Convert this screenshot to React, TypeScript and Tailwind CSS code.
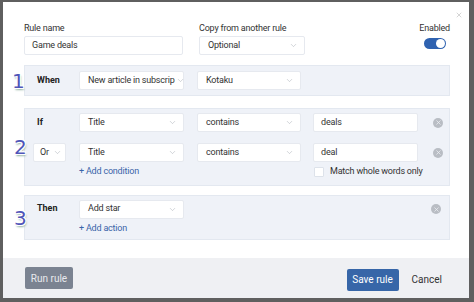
import { ChevronDown, X } from "lucide-react";

function Select({
  value,
  w,
  pl = "pl-[8px]",
  pr = "pr-[6px]",
}: {
  value: string;
  w: string;
  pl?: string;
  pr?: string;
}) {
  return (
    <div
      className={`${w} ${pl} ${pr} h-[19px] bg-white border border-[#e6e9ef] rounded-[2px] flex items-center justify-between text-[9px] tracking-[-0.2px] text-[#333]`}
    >
      <span className="whitespace-nowrap">{value}</span>
      <ChevronDown size={9} strokeWidth={1.3} className="text-[#a3a9b2] shrink-0 ml-[1px]" />
    </div>
  );
}

function Input({ value, w }: { value: string; w: string }) {
  return (
    <div
      className={`${w} h-[19px] bg-white border border-[#e6e9ef] rounded-[2px] flex items-center pl-[7px] text-[9px] tracking-[-0.2px] text-[#333]`}
    >
      {value}
    </div>
  );
}

function RemoveBtn() {
  return (
    <div className="w-[10px] h-[10px] rounded-full bg-[#b9bdc4] flex items-center justify-center ml-[15px]">
      <X size={7} strokeWidth={2.5} className="text-[#eef1f5]" />
    </div>
  );
}

function Num({ n, cls }: { n: string; cls: string }) {
  return (
    <span
      className={`absolute ${cls} text-[20px] leading-none text-[#4f55b8] [text-shadow:1px_1px_0_#fff,-1px_-1px_0_#fff,1px_-1px_0_#fff,-1px_1px_0_#fff,1px_2px_2px_#8a9]`}
      style={{ fontFamily: "'DejaVu Sans', sans-serif" }}
    >
      {n}
    </span>
  );
}

export default function App() {
  return (
    <div
      className="w-[474px] h-[302px] bg-[#5f5f5f] pl-[3px] pt-[2px] pr-[5px] pb-[4px]"
      style={{ fontFamily: "Roboto, 'Liberation Sans', sans-serif" }}
    >
      <div className="h-full bg-white flex flex-col relative">
        <X size={8} strokeWidth={1.5} className="absolute right-[6px] top-[9px] text-[#aaa]" />

        <div className="flex-1 pl-[21px] pr-[19px] pt-[20px] relative">
          {/* header fields */}
          <div className="flex items-start">
            <div className="flex flex-col">
              <span className="text-[9px] tracking-[-0.2px] text-[#333] leading-[12px] mb-[2px]">Rule name</span>
              <Input value="Game deals" w="w-[159px]" />
            </div>
            <div className="flex flex-col ml-[16px]">
              <span className="text-[9px] tracking-[-0.2px] text-[#333] leading-[12px] mb-[2px]">Copy from another rule</span>
              <Select value="Optional" w="w-[106px]" />
            </div>
            <div className="flex-1" />
            <div className="flex flex-col items-end">
              <span className="text-[9px] tracking-[-0.2px] text-[#333] leading-[12px] mb-[4px]">Enabled</span>
              <div className="w-[22px] h-[11px] rounded-full bg-[#2f62b0] flex items-center justify-end pr-[1px] mr-[4px]">
                <div className="w-[9px] h-[9px] rounded-full bg-white" />
              </div>
            </div>
          </div>

          {/* When */}
          <div className="relative mt-[10px]">
            <Num n="1" cls="-left-[12px] top-[6px]" />
            <div className="h-[31px] bg-[#eff2f8] border border-[#e3e8f0] flex items-center pl-[8px]">
              <span className="w-[46px] pl-[4px] text-[9px] font-bold text-[#222]">When</span>
              <Select value="New article in subscrip" w="w-[105px]" pr="pr-[4px]" />
              <div className="w-[13px]" />
              <Select value="Kotaku" w="w-[104px]" />
            </div>
          </div>

          {/* If */}
          <div className="relative mt-[12px]">
            <Num n="2" cls="-left-[10px] top-[29px]" />
            <div className="bg-[#eff2f8] border border-[#e3e8f0] pl-[8px] pt-[4px] pb-[6px]">
              <div className="flex items-center">
                <span className="w-[46px] pl-[4px] text-[9px] font-bold text-[#222]">If</span>
                <Select value="Title" w="w-[105px]" />
                <div className="w-[13px]" />
                <Select value="contains" w="w-[104px]" />
                <div className="w-[12px]" />
                <Input value="deals" w="w-[105px]" />
                <RemoveBtn />
              </div>
              <div className="flex items-center mt-[11px]">
                <div className="w-[46px]">
                  <Select value="Or" w="w-[33px]" pl="pl-[6px]" pr="pr-[3px]" />
                </div>
                <Select value="Title" w="w-[105px]" />
                <div className="w-[13px]" />
                <Select value="contains" w="w-[104px]" />
                <div className="w-[12px]" />
                <Input value="deal" w="w-[105px]" />
                <RemoveBtn />
              </div>
              <div className="flex items-center mt-[3px]">
                <span className="w-[46px]" />
                <span className="w-[234px] text-[9px] tracking-[-0.2px] text-[#3a64a8]">+ Add condition</span>
                <div className="w-[10px] h-[10px] bg-white border border-[#dde2ea] rounded-[1px] ml-[1px]" />
                <span className="ml-[6px] text-[9px] tracking-[-0.2px] text-[#333]">Match whole words only</span>
              </div>
            </div>
          </div>

          {/* Then */}
          <div className="relative mt-[9px]">
            <Num n="3" cls="-left-[10px] top-[13px]" />
            <div className="bg-[#eff2f8] border border-[#e3e8f0] pl-[8px] pt-[4px] pb-[4px]">
              <div className="flex items-center">
                <span className="w-[46px] pl-[4px] text-[9px] font-bold text-[#222]">Then</span>
                <Select value="Add star" w="w-[105px]" />
                <div className="flex-1" />
                <div className="mr-[8px]">
                  <RemoveBtn />
                </div>
              </div>
              <div className="flex items-center mt-[3px]">
                <span className="w-[46px]" />
                <span className="text-[9px] tracking-[-0.2px] text-[#3a64a8]">+ Add action</span>
              </div>
            </div>
          </div>
        </div>

        {/* footer */}
        <div className="h-[40px] bg-[#eff0f3] flex items-center pl-[22px] pr-[27px]">
          <div className="w-[48px] h-[22px] bg-[#7b8391] rounded-[2px] flex items-center justify-center text-[10px] text-[#e8eaee]">
            Run rule
          </div>
          <div className="flex-1" />
          <div className="w-[52px] h-[22px] bg-[#3766a8] rounded-[2px] flex items-center justify-center text-[10px] text-white mt-[3px]">
            Save rule
          </div>
          <span className="ml-[13px] text-[10px] text-[#333] mt-[3px]">Cancel</span>
        </div>
      </div>
    </div>
  );
}
